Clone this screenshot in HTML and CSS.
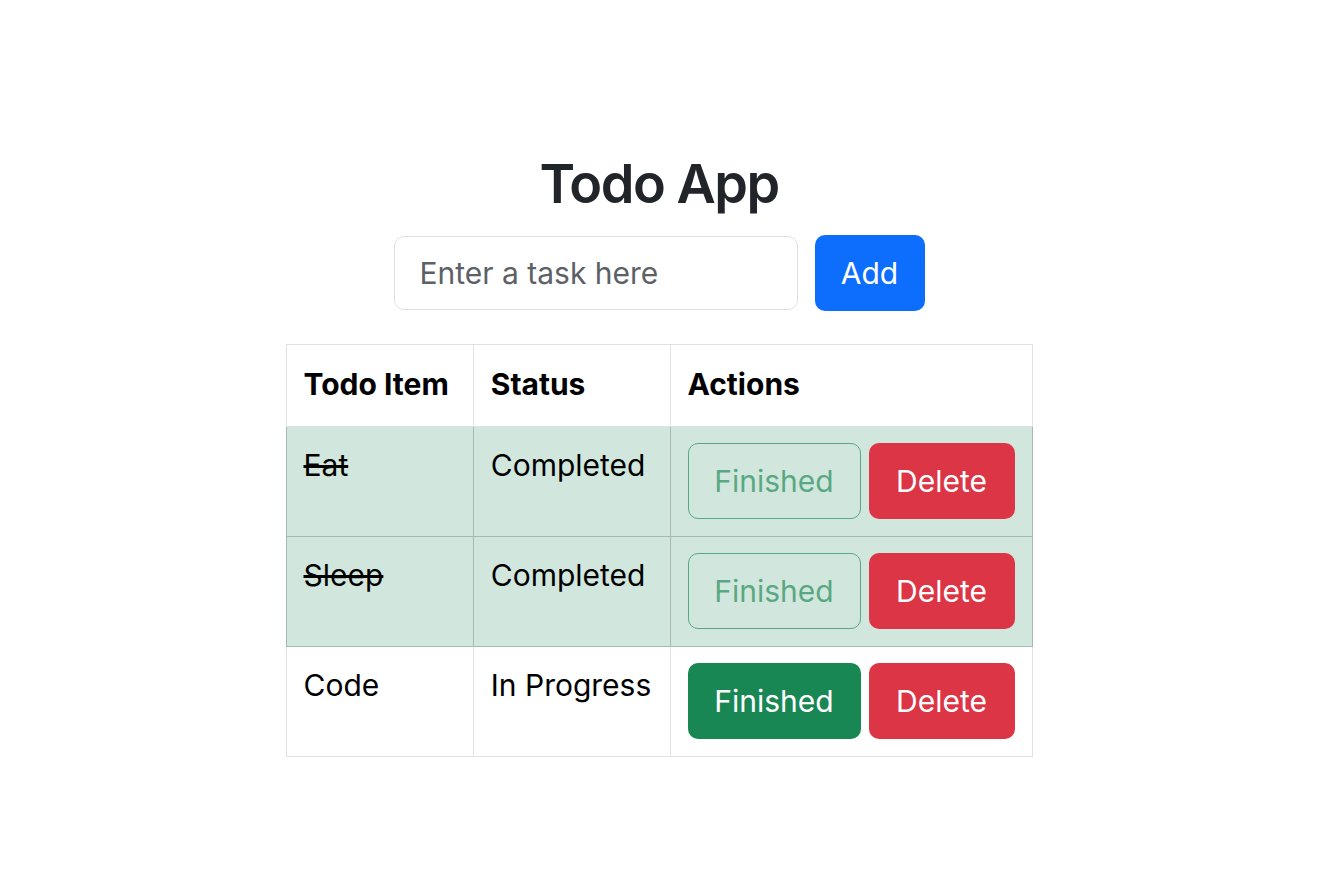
FILE: index.html
```html
<!DOCTYPE html>
<html lang="en">
<head>
    <meta charset="UTF-8">
    <meta name="viewport" content="width=device-width, initial-scale=1">
    <title>Todo App</title>
    <link rel="stylesheet" href="styles.css">
</head>
<body>
    <div class="wrapper">
        <h1>Todo App</h1>
        <form class="todo-form">
            <input type="text" class="task-input" placeholder="Enter a task here">
            <button type="submit" class="btn btn-primary">Add</button>
        </form>
        <table class="todo-table">
            <thead>
                <tr>
                    <th class="col-item">Todo Item</th>
                    <th class="col-status">Status</th>
                    <th class="col-actions">Actions</th>
                </tr>
            </thead>
            <tbody>
                <tr class="row-done">
                    <td><s>Eat</s></td>
                    <td>Completed</td>
                    <td>
                        <div class="actions">
                            <button class="btn btn-finish btn-outline-success" disabled>Finished</button>
                            <button class="btn btn-delete btn-danger">Delete</button>
                        </div>
                    </td>
                </tr>
                <tr class="row-done">
                    <td><s>Sleep</s></td>
                    <td>Completed</td>
                    <td>
                        <div class="actions">
                            <button class="btn btn-finish btn-outline-success" disabled>Finished</button>
                            <button class="btn btn-delete btn-danger">Delete</button>
                        </div>
                    </td>
                </tr>
                <tr>
                    <td>Code</td>
                    <td>In Progress</td>
                    <td>
                        <div class="actions">
                            <button class="btn btn-finish btn-success">Finished</button>
                            <button class="btn btn-delete btn-danger">Delete</button>
                        </div>
                    </td>
                </tr>
            </tbody>
        </table>
    </div>
</body>
</html>
```

FILE: styles.css
```css
body, h1, form, button, input, table {
    margin: 0;
    padding: 0;
    box-sizing: border-box;
}

body {
    font-family: 'Inter', 'Noto Sans', sans-serif;
    font-size: 30px;
    line-height: 1.5;
    color: #000;
    background-color: #fff;
}

.wrapper {
    width: 1318px;
    padding-top: 152px;
    display: flex;
    flex-direction: column;
    align-items: center;
}

h1 {
    font-size: 54px;
    font-weight: 600;
    line-height: 1.2;
    letter-spacing: -1.5px;
    color: #212529;
    margin-bottom: 18px;
}

.todo-form {
    display: flex;
    align-items: center;
    gap: 17px;
    margin-bottom: 33px;
}

.task-input {
    width: 404px;
    height: 74px;
    padding: 0 25px;
    border: 1px solid #dee2e6;
    border-radius: 10px;
    font-family: inherit;
    font-size: 30px;
    color: #212529;
}

.task-input::placeholder {
    color: #5c6166;
}

.btn {
    height: 76px;
    padding: 0;
    border: 1px solid transparent;
    border-radius: 10px;
    font-family: inherit;
    font-size: 30px;
    color: #fff;
    cursor: pointer;
}

.btn-primary {
    width: 110px;
    background-color: #0d6efd;
}

.btn-finish {
    width: 173px;
}

.btn-delete {
    width: 146px;
}

.btn-success {
    background-color: #198754;
}

.btn-danger {
    background-color: #dc3545;
}

.btn-outline-success {
    background-color: transparent;
    border-color: #198754;
    color: #198754;
    opacity: 0.65;
    cursor: default;
}

.todo-table {
    border-collapse: collapse;
    width: 747px;
    border: 1px solid #dee2e6;
}

.todo-table th,
.todo-table td {
    box-sizing: border-box;
    border: 1px solid #dee2e6;
    padding: 16px 17px 17px;
    text-align: left;
    vertical-align: top;
}

.todo-table th {
    padding: 17px 17px 19px;
    font-weight: 700;
    vertical-align: middle;
}

.col-item {
    width: 190px;
}

.col-status {
    width: 197px;
}

.row-done td {
    background-color: #d1e7dd;
    border-color: #a9b9b1;
}

.actions {
    display: flex;
    gap: 8px;
}
```
